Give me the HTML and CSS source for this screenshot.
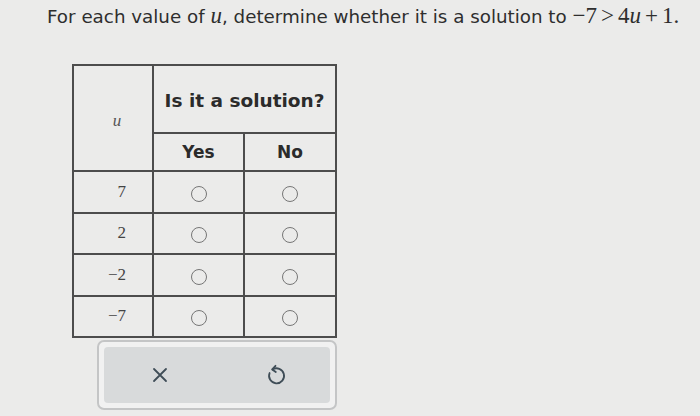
FILE: index.html
```html
<!DOCTYPE html>
<html>
<head>
<meta charset="utf-8">
<link rel="stylesheet" href="styles.css">
</head>
<body>
<div class="page">
  <p class="prompt">For each value of <span class="m"><i>u</i></span>, determine whether it is a solution to <span class="m">−7<span class="op">&gt;</span>4<i>u</i><span class="op">+</span>1.</span></p>
  <div class="work">
    <table class="grid">
      <colgroup><col class="c1"><col class="c2"><col class="c3"></colgroup>
      <tr class="h1">
        <td class="var" rowspan="2"><i>u</i></td>
        <th colspan="2">Is it a solution?</th>
      </tr>
      <tr class="h2">
        <th>Yes</th>
        <th>No</th>
      </tr>
      <tr><td class="val">7</td><td><span class="radio"></span></td><td><span class="radio"></span></td></tr>
      <tr><td class="val">2</td><td><span class="radio"></span></td><td><span class="radio"></span></td></tr>
      <tr><td class="val">−2</td><td><span class="radio"></span></td><td><span class="radio"></span></td></tr>
      <tr><td class="val">−7</td><td><span class="radio"></span></td><td><span class="radio"></span></td></tr>
    </table>
    <div class="actions">
      <div class="inner">
        <button class="btn" aria-label="clear">
          <svg width="16" height="16" viewBox="0 0 16 16"><path d="M2 2 L14 14 M14 2 L2 14" stroke="#3f4d57" stroke-width="1.8" fill="none" stroke-linecap="round"/></svg>
        </button>
        <button class="btn" aria-label="undo">
          <svg width="20" height="22" viewBox="0 0 20 22"><path d="M6.5 5.5 A7.5 7.5 0 1 1 3.6 9" stroke="#3f4d57" stroke-width="1.8" fill="none" stroke-linecap="round"/><path d="M9.5 1.8 L6.2 5.4 L9.8 8" stroke="#3f4d57" stroke-width="1.8" fill="none" stroke-linecap="round" stroke-linejoin="round"/></svg>
        </button>
      </div>
    </div>
  </div>
</div>
</body>
</html>
```
FILE: styles.css
```css
html, body {
  margin: 0;
  padding: 0;
  background: #ebebea;
}
.page {
  width: 700px;
  height: 416px;
  padding: 2px 0 0 47px;
  box-sizing: border-box;
  font-family: "DejaVu Sans", Verdana, sans-serif;
  color: #2e2e2e;
}
.prompt {
  margin: 0;
  font-size: 18.3px;
  line-height: 28px;
  white-space: nowrap;
}
.m {
  font-family: "Liberation Serif", "Times New Roman", serif;
  font-size: 23px;
}
.op { margin: 0 4px; }
.work {
  margin: 33px 0 0 25px;
  width: 265px;
}
.grid {
  border-collapse: collapse;
  table-layout: fixed;
  width: 263px;
}
.c1 { width: 80px; }
.c2 { width: 91px; }
.c3 { width: 92px; }
.grid td, .grid th {
  border: 2px solid #4d4d4d;
  padding: 0;
  text-align: center;
}
.grid tr { height: 41.5px; }
.grid tr.h1 { height: 68px; }
.grid tr.h2 { height: 38px; }
.grid th {
  font-weight: bold;
  font-size: 17px;
  color: #2b2b2b;
}
.grid tr.h1 th { font-size: 18.5px; padding-top: 2px; }
.var {
  font-family: "Liberation Serif", serif;
  font-size: 17px;
  color: #555;
  padding: 6px 0 0 8px !important;
}
.val {
  text-align: right !important;
  padding-right: 26px !important;
  font-family: "Liberation Serif", serif;
  font-size: 17px;
  color: #444;
}
.radio {
  display: inline-block;
  width: 14px;
  height: 14px;
  border: 1.5px solid #767676;
  border-radius: 50%;
  vertical-align: middle;
  margin: 3px 0 0 0;
}
.actions {
  margin: 2px 0 0 25px;
  width: 240px;
  height: 70px;
  box-sizing: border-box;
  border: 2px solid #c4c5c6;
  border-radius: 7px;
  background: #f1f1f1;
  padding: 5px;
}
.inner {
  height: 100%;
  background: #d8dadb;
  border-radius: 4px;
  display: flex;
  justify-content: space-between;
  align-items: center;
  padding: 0 39px 0 41px;
}
.btn {
  background: none;
  border: 0;
  padding: 0;
  display: flex;
  align-items: center;
  justify-content: center;
  width: 30px;
  height: 30px;
}
```
